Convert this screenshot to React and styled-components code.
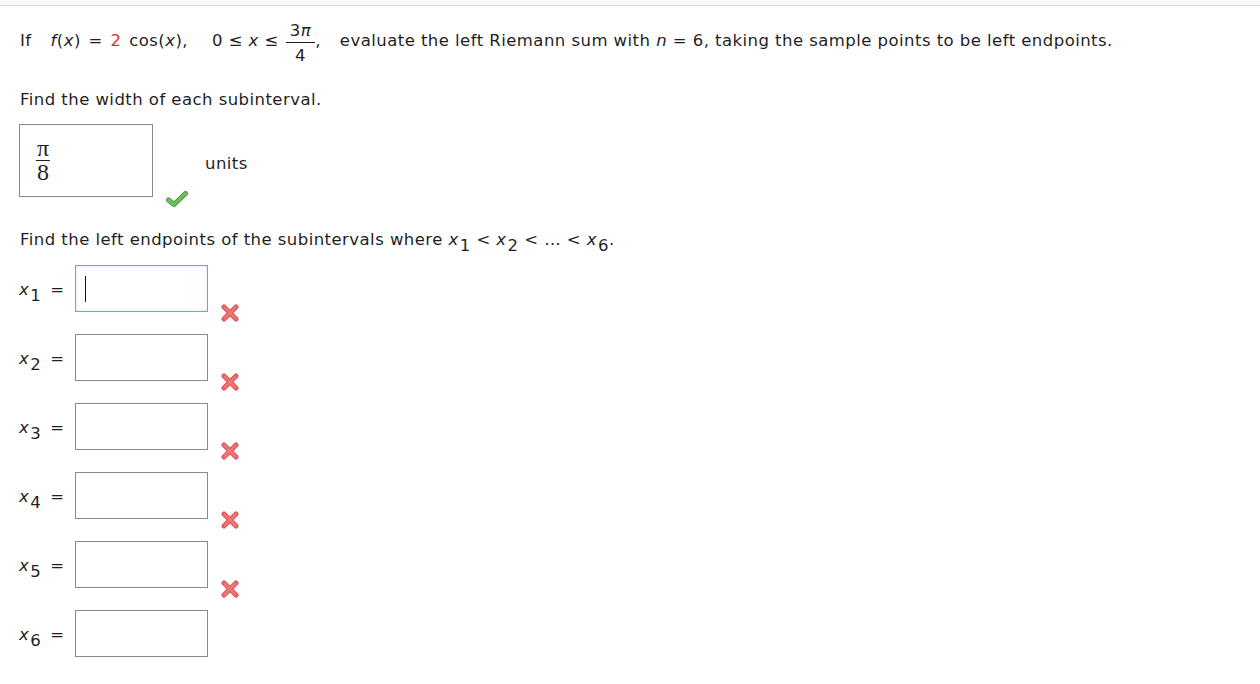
import React from 'react';
import styled, { createGlobalStyle } from 'styled-components';

const Global = createGlobalStyle`
  html, body { margin: 0; padding: 0; background: #fff; }
  body {
    font-family: Verdana, "DejaVu Sans", sans-serif;
    color: #1f1f1f;
    font-size: 16.5px;
    letter-spacing: 0.45px;
  }
`;

const TopStrip = styled.div`
  height: 5px;
  background: #f7f7f7;
  border-bottom: 1px solid #d9d9d9;
`;

const Content = styled.div`
  padding-left: 20px;
`;

const ProblemLine = styled.div`
  display: flex;
  align-items: center;
  height: 52px;
  margin-top: 8px;
  white-space: pre;
`;

const Seg = styled.span`
  margin-left: ${(p) => p.$ml || 0}px;
  word-spacing: ${(p) => p.$ws || 0}px;
`;

const I = styled.i`
  font-style: italic;
`;

const Red = styled.span`
  color: #d0302c;
`;

const Frac = styled.span`
  display: inline-flex;
  flex-direction: column;
  align-items: center;
  margin-left: ${(p) => p.$ml || 0}px;
  margin-top: 5px;
`;

const Num = styled.span`
  line-height: 19px;
  padding: 0 4px;
`;

const Bar = styled.span`
  align-self: stretch;
  height: 1px;
  background: #1f1f1f;
  margin: 2px 0 3px;
`;

const Den = styled.span`
  line-height: 19px;
`;

const Prompt = styled.div`
  margin-top: ${(p) => p.$mt}px;
  line-height: 20px;
`;

const WidthRow = styled.div`
  display: flex;
  align-items: center;
  margin-top: 14px;
  margin-left: -1px;
`;

const AnswerBox = styled.div`
  width: 134px;
  height: 73px;
  border: 1px solid #8a8a8a;
  display: flex;
  align-items: center;
  padding-left: 16px;
  box-sizing: border-box;
  flex: none;
`;

const SerifFrac = styled.span`
  display: inline-flex;
  flex-direction: column;
  align-items: center;
  font-family: "Liberation Serif", "Times New Roman", serif;
  font-size: 24px;
  letter-spacing: 0;
  margin-top: -2px;
`;

const SerifBar = styled.span`
  align-self: stretch;
  height: 1px;
  background: #222;
  margin: 2px 0 1px;
`;

const SerifPart = styled.span`
  line-height: 20px;
  padding: 0 1px;
`;

const Units = styled.span`
  margin-left: 52px;
  margin-top: 5px;
`;

const CheckWrap = styled.div`
  margin-left: 146px;
  margin-top: -6px;
  height: 16px;
  line-height: 0;
`;

const Rows = styled.div`
  display: flex;
  flex-direction: column;
  gap: 22px;
  margin-top: 15px;
  margin-left: -1px;
`;

const Row = styled.div`
  display: flex;
  align-items: flex-end;
  height: 47px;
`;

const Label = styled.div`
  align-self: center;
  width: 56px;
  display: flex;
  align-items: center;
  margin-top: 2px;
  white-space: pre;
`;

const Sub = styled.span`
  position: relative;
  top: 6px;
  margin-left: 1px;
`;

const Eq = styled.span`
  margin-left: 9px;
`;

const InputBox = styled.div`
  width: 133px;
  height: 47px;
  box-sizing: border-box;
  border: 1px solid ${(p) => (p.$focus ? '#7f9fd6' : '#8a8a8a')};
  box-shadow: ${(p) => (p.$focus ? 'inset 0 0 2px rgba(120,160,220,0.5)' : 'none')};
  display: flex;
  align-items: center;
  padding-left: 9px;
  flex: none;
`;

const Caret = styled.span`
  width: 1px;
  height: 26px;
  background: #111;
`;

const CrossWrap = styled.div`
  margin-left: 13px;
  margin-bottom: -10px;
  height: 18px;
  line-height: 0;
`;

const Check = () => (
  <svg width="22" height="16" viewBox="0 0 22 16">
    <path d="M2.5 9 L8 13.5 L19.5 2.5" fill="none" stroke="#4f9a45" strokeWidth="5" strokeLinecap="round" strokeLinejoin="round" />
    <path d="M2.5 9 L8 13.5 L19.5 2.5" fill="none" stroke="#72bf62" strokeWidth="3" strokeLinecap="round" strokeLinejoin="round" />
  </svg>
);

const Cross = () => (
  <svg width="18" height="18" viewBox="0 0 18 18">
    <path d="M3 3 L15 15 M15 3 L3 15" fill="none" stroke="#e15a5a" strokeWidth="5" strokeLinecap="round" />
    <path d="M3.5 3.5 L14.5 14.5 M14.5 3.5 L3.5 14.5" fill="none" stroke="#ef7676" strokeWidth="2.5" strokeLinecap="round" />
  </svg>
);

const rows = [1, 2, 3, 4, 5, 6];

export default function App() {
  return (
    <>
      <Global />
      <TopStrip />
      <Content>
        <ProblemLine>
          <Seg>If</Seg>
          <Seg $ml={19} $ws={2}>
            <I>f</I>(<I>x</I>) = <Red>2</Red> cos(<I>x</I>),
          </Seg>
          <Seg $ml={24}>
            0 ≤ <I>x</I> ≤
          </Seg>
          <Frac $ml={7}>
            <Num>
              3<I>π</I>
            </Num>
            <Bar />
            <Den>4</Den>
          </Frac>
          <Seg>,</Seg>
          <Seg $ml={19}>
            evaluate the left Riemann sum with <I>n</I> = 6, taking the sample points to be left endpoints.
          </Seg>
        </ProblemLine>

        <Prompt $mt={24}>Find the width of each subinterval.</Prompt>

        <WidthRow>
          <AnswerBox>
            <SerifFrac>
              <SerifPart>π</SerifPart>
              <SerifBar />
              <SerifPart>8</SerifPart>
            </SerifFrac>
          </AnswerBox>
          <Units>units</Units>
        </WidthRow>
        <CheckWrap>
          <Check />
        </CheckWrap>

        <Prompt $mt={23}>
          Find the left endpoints of the subintervals where <I>x</I>
          <Sub>1</Sub> &lt; <I>x</I>
          <Sub>2</Sub> &lt; … &lt; <I>x</I>
          <Sub>6</Sub>.
        </Prompt>

        <Rows>
          {rows.map((n) => (
            <Row key={n}>
              <Label>
                <I>x</I>
                <Sub>{n}</Sub>
                <Eq>=</Eq>
              </Label>
              <InputBox $focus={n === 1}>{n === 1 && <Caret />}</InputBox>
              {n < 6 && (
                <CrossWrap>
                  <Cross />
                </CrossWrap>
              )}
            </Row>
          ))}
        </Rows>
      </Content>
    </>
  );
}
